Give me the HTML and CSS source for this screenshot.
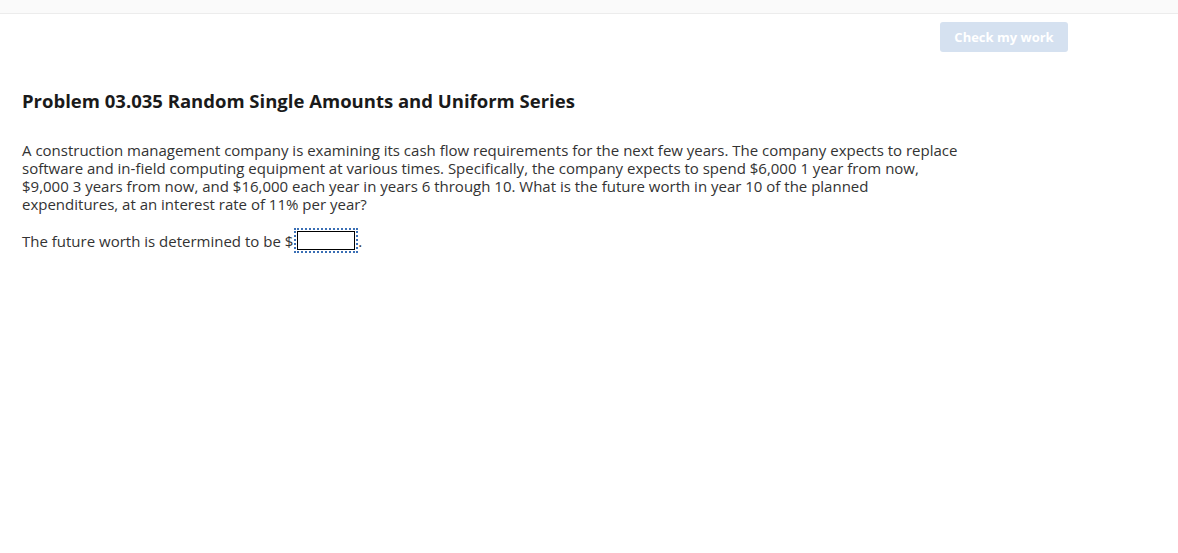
FILE: index.html
```html
<!DOCTYPE html>
<html>
<head>
<meta charset="utf-8">
<link rel="stylesheet" href="styles.css">
</head>
<body>
<div class="topbar"></div>
<div class="toolbar">
  <button class="check">Check my work</button>
</div>
<main class="content">
  <h1 class="title">Problem 03.035 Random Single Amounts and Uniform Series</h1>
  <p class="text">A construction management company is examining its cash flow requirements for the next few years. The company expects to replace software and in-field computing equipment at various times. Specifically, the company expects to spend $6,000 1 year from now, $9,000 3 years from now, and $16,000 each year in years 6 through 10. What is the future worth in year 10 of the planned expenditures, at an interest rate of 11% per year?</p>
  <p class="answer">The future worth is determined to be $<span class="field"><span class="box"></span></span>.</p>
</main>
</body>
</html>
```
FILE: styles.css
```css
html, body {
  margin: 0;
  padding: 0;
  background: #ffffff;
}
body {
  font-family: "Open Sans", "Liberation Sans", sans-serif;
  color: #333333;
}
.topbar {
  height: 13px;
  background: #fafafa;
  border-bottom: 1px solid #ececec;
}
.toolbar {
  display: flex;
  justify-content: flex-end;
  padding: 8px 110px 0 0;
}
.check {
  width: 128px;
  height: 30px;
  border: none;
  border-radius: 3px;
  background: #d5e1f0;
  color: #ffffff;
  font-family: "Open Sans", sans-serif;
  font-weight: 700;
  font-size: 13px;
  padding: 0;
}
.content {
  padding: 0 22px;
  width: 945px;
}
.title {
  margin: 38px 0 0;
  font-size: 18.5px;
  font-weight: 700;
  color: #1a1a1a;
  line-height: 22px;
}
.text {
  margin: 29px 0 0;
  font-size: 15px;
  line-height: 18px;
}
.answer {
  margin: 15px 0 0;
  font-size: 15px;
  line-height: 18px;
}
.field {
  display: inline-block;
  vertical-align: -6px;
  border: 2px dotted #3a6fb5;
  padding: 1px;
  margin-left: 1px;
}
.box {
  display: block;
  width: 56px;
  height: 17px;
  border: 1px solid #000;
  background: #fff;
}
```
